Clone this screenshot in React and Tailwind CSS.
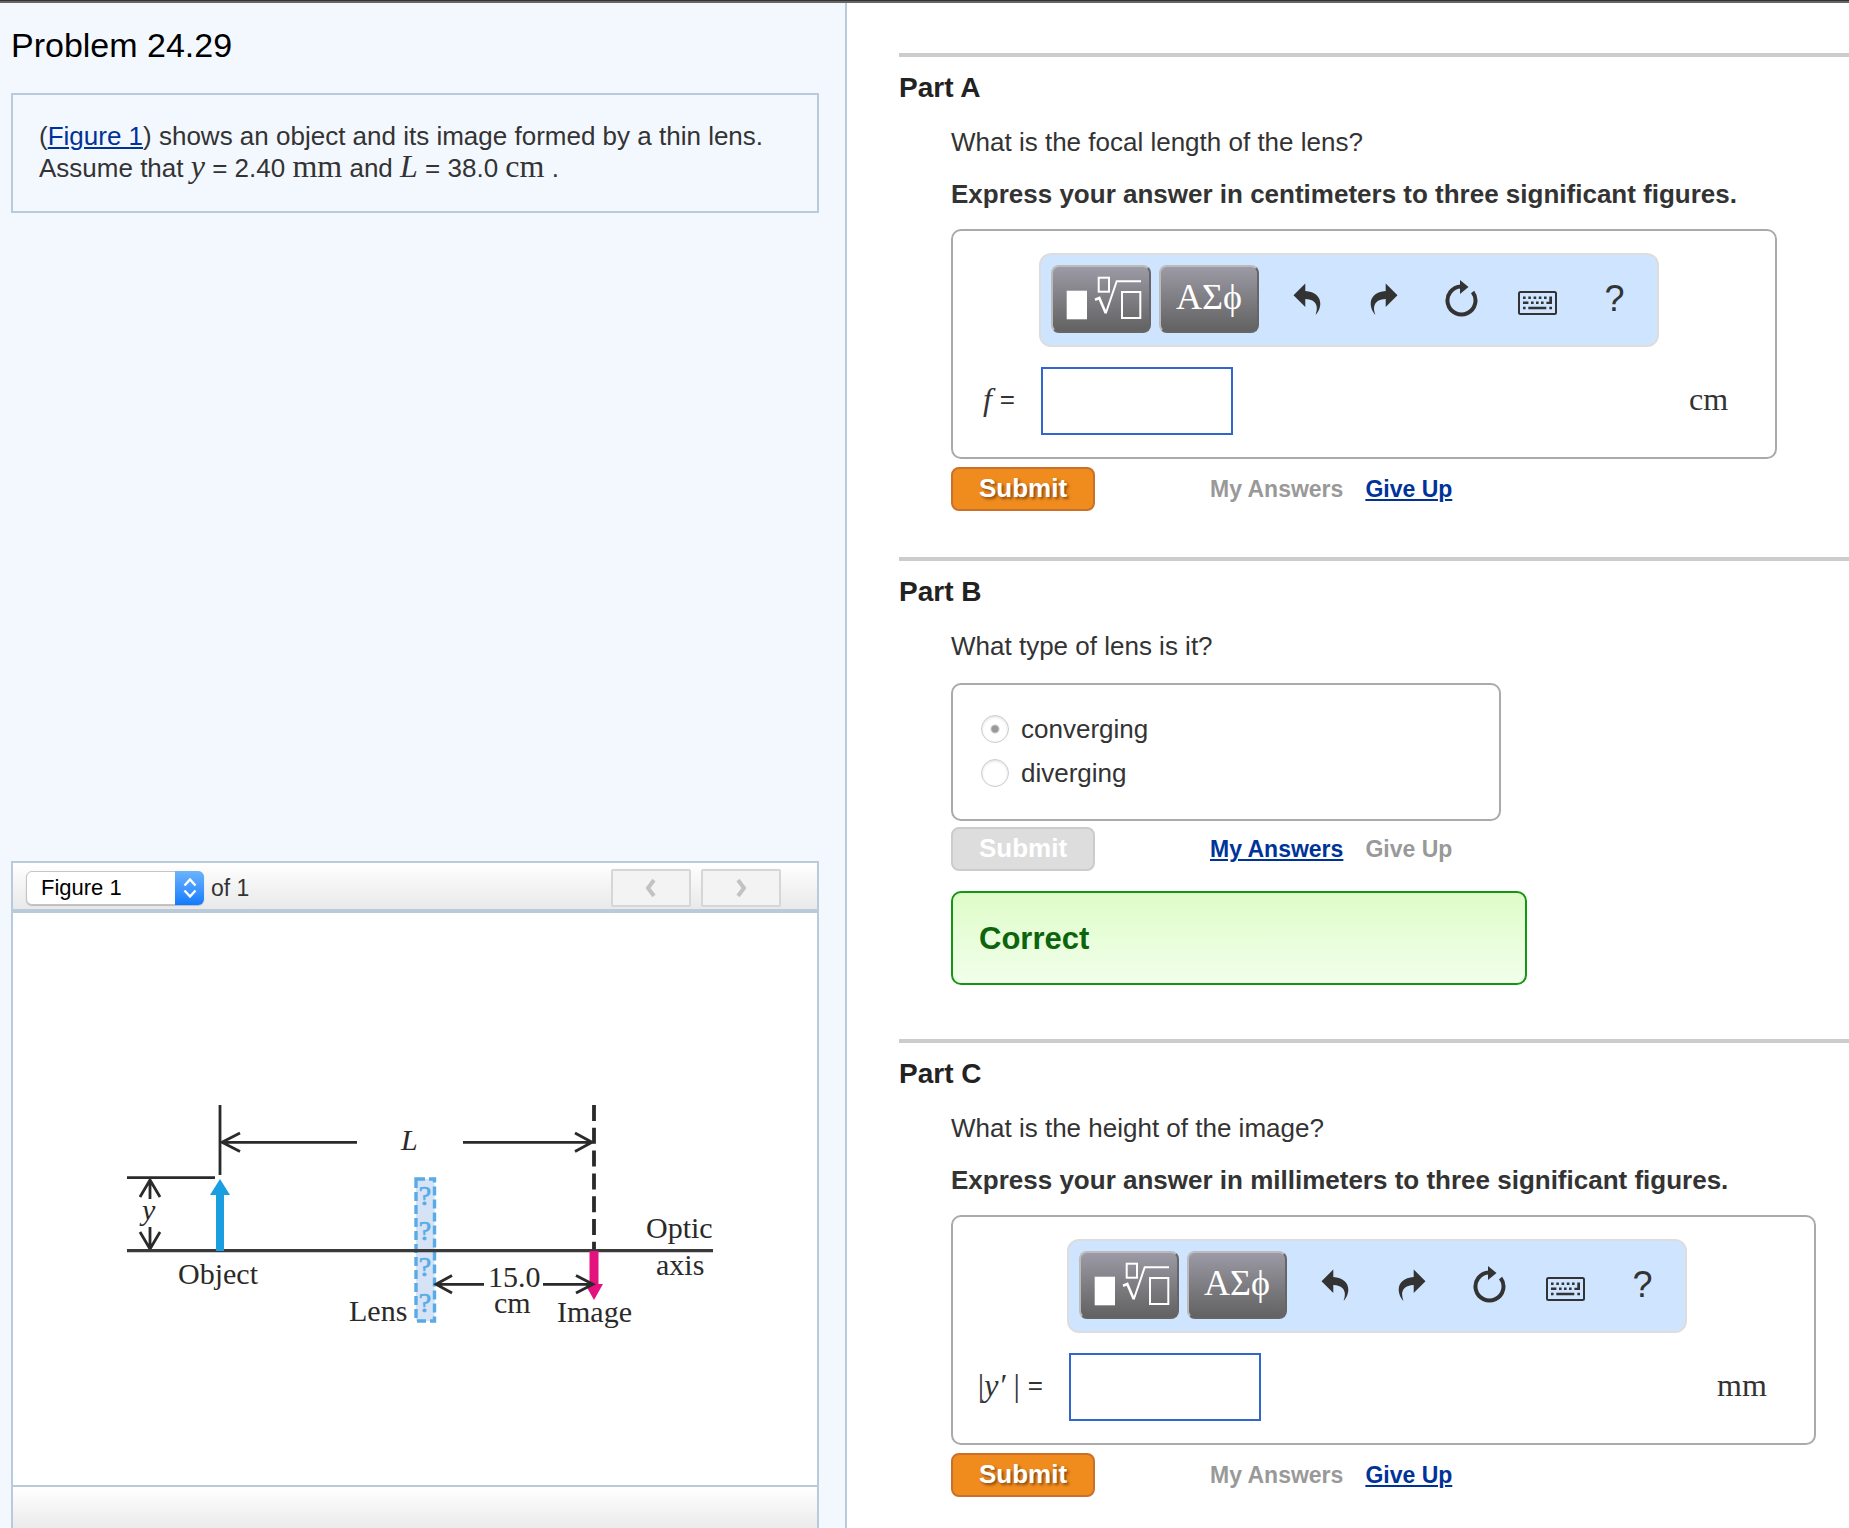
import { useState } from "react";

function UndoIcon({ flipped = false }) {
  return (
    <svg width="28" height="32" viewBox="0 0 28 32" fill="#333" aria-hidden="true">
      <path
        transform={flipped ? "matrix(-1 0 0 1 28 0)" : undefined}
        d="M0.5 12.3 L12.3 0.5 V8 C22 8.5 27.5 14 27.3 21 C27.2 25 25 30 22.6 31.7 C25.5 24 24 16.5 12.3 16 V24 Z"
      />
    </svg>
  );
}

function ResetIcon() {
  return (
    <svg width="34" height="38" viewBox="0 0 34 38" aria-hidden="true">
      <path d="M17 6.5 A14 14 0 1 0 28.6 12" fill="none" stroke="#333" strokeWidth="4" />
      <path d="M16 0 L24.5 7 L16 14 Z" fill="#333" />
    </svg>
  );
}

function KeyboardIcon() {
  return (
    <svg width="39" height="24" viewBox="0 0 39 24" aria-hidden="true">
      <rect x="1" y="1" width="37" height="22" rx="1.5" fill="none" stroke="#333" strokeWidth="2" />
      <g fill="#333">
        <path d="M5 5.5h2.6v2.6H5z M10.3 5.5h2.6v2.6h-2.6z M15.6 5.5h2.6v2.6h-2.6z M20.8 5.5h2.6v2.6h-2.6z M26 5.5h2.6v2.6H26z" />
        <path d="M31.3 5.5h2.7v7.6h-5.6v-2.4h2.9z" />
        <path d="M5 10.6h5.4V13H5z M13 10.6h2.6V13H13z M18 10.6h2.6V13H18z M23 10.6h2.6V13H23z" />
        <path d="M5 15.8h2.6v2.4H5z M10.3 15.8h18v2.4h-18z M31.3 15.8H34v2.4h-2.7z" />
      </g>
    </svg>
  );
}

function TemplateIcon() {
  return (
    <svg width="96" height="64" viewBox="1 2 96 64" fill="none" stroke="#fff" aria-hidden="true">
      <rect x="14.7" y="25.7" width="20.3" height="28.6" fill="#fff" stroke="none" />
      <rect x="46.7" y="12.7" width="10.3" height="14" strokeWidth="2" />
      <path d="M43 34.7 L47.3 33 L53.7 48" strokeWidth="2.6" />
      <path d="M53.7 48.5 L64.7 16.3 H89" strokeWidth="2" />
      <rect x="70" y="27" width="18.3" height="26" strokeWidth="2" />
    </svg>
  );
}

const TOOLS = [
  { label: "Undo", icon: <UndoIcon /> },
  { label: "Redo", icon: <UndoIcon flipped /> },
  { label: "Reset", icon: <ResetIcon /> },
  { label: "Keyboard shortcuts", icon: <KeyboardIcon />, className: "pt-2" },
  { label: "Help", icon: "?" },
];

const GRAY_BUTTON =
  "flex h-[68px] w-[100px] items-center justify-center rounded-lg border-2 border-t-[#bbb] border-l-[#bbb] border-r-[#666] border-b-[#666] bg-linear-to-b from-[#9c9aa5] to-[#626262]";

function Toolbar() {
  return (
    <div className="flex h-[94px] rounded-xl border-2 border-[#ddd] bg-[#cfe5ff] p-2.5">
      <div className="flex gap-2">
        <button type="button" aria-label="Templates" className={GRAY_BUTTON}>
          <TemplateIcon />
        </button>
        <button
          type="button"
          aria-label="Symbols"
          className={`${GRAY_BUTTON} pb-1 font-['Liberation_Serif',serif] text-[36px] leading-10 text-white`}
        >
          ΑΣϕ
        </button>
      </div>
      <div className="ml-[9px] flex">
        {TOOLS.map((tool) => (
          <button
            key={tool.label}
            type="button"
            aria-label={tool.label}
            className={`flex h-[68px] w-[77px] items-center justify-center text-[36px] leading-10 text-[#333] ${tool.className ?? ""}`}
          >
            {tool.icon}
          </button>
        ))}
      </div>
    </div>
  );
}

function MathText({ children }) {
  return <span className="font-['Liberation_Serif',serif] text-[32px] leading-6">{children}</span>;
}

function AnswerBox({ id, label, unit, columns }) {
  return (
    <div
      className={`mt-[19px] mb-2 grid w-fit gap-y-5 rounded-[10px] border-2 border-[#aaa] p-[22px] pr-[47px] ${columns}`}
    >
      <div className="col-start-2">
        <Toolbar />
      </div>
      <label
        htmlFor={id}
        className="col-start-1 flex items-center justify-end gap-2 pr-6 pb-1 whitespace-nowrap"
      >
        <MathText>{label}</MathText>
        <span>=</span>
      </label>
      <input
        id={id}
        type="text"
        className="ml-0.5 h-[68px] w-48 border-2 border-[#36c] bg-white px-2 outline-none"
      />
      <span className="ml-[30px] flex items-center pb-1">
        <MathText>{unit}</MathText>
      </span>
    </div>
  );
}

function ActionLink({ active, children }) {
  return active ? (
    <a href="#" className="text-[#039] underline">
      {children}
    </a>
  ) : (
    <span className="text-[#999]">{children}</span>
  );
}

function Actions({ done = false }) {
  return (
    <div className="flex items-center text-[23px] leading-7 font-bold">
      <button
        type="button"
        disabled={done}
        className={`h-11 w-36 rounded-lg border-2 pb-0.5 text-[26px] leading-8 text-white ${
          done
            ? "border-[#ccc] bg-[#ddd]"
            : "border-[#c9702b] bg-[#f08c1e] [text-shadow:2px_2px_3px_#8a4a10]"
        }`}
      >
        Submit
      </button>
      <div className="ml-[115px] flex gap-[22px]">
        <ActionLink active={done}>My Answers</ActionLink>
        <ActionLink active={!done}>Give Up</ActionLink>
      </div>
    </div>
  );
}

function Part({ name, question, instructions, className = "", children }) {
  return (
    <section className={`border-t-4 border-[#ccc] pt-[13px] ${className}`}>
      <h2 className="text-[28px] leading-9 font-bold text-[#222]">{name}</h2>
      <div className="pl-[52px]">
        <p className="mt-5">{question}</p>
        {instructions && <p className="mt-5 font-bold">{instructions}</p>}
        {children}
      </div>
    </section>
  );
}

function LensOptions() {
  const [lens, setLens] = useState("converging");

  return (
    <div className="mt-[21px] mb-1.5 flex h-[138px] w-[550px] flex-col gap-3 rounded-[10px] border-2 border-[#aaa] px-7 pt-7">
      {["converging", "diverging"].map((option) => (
        <label key={option} className="flex items-center gap-3">
          <input
            type="radio"
            name="lens"
            value={option}
            checked={lens === option}
            onChange={() => setLens(option)}
            className="size-7 appearance-none rounded-full border border-[#ccc] bg-white shadow-[inset_0_1px_3px_#ddd] checked:bg-[radial-gradient(circle,#999_3px,#fff_5px)]"
          />
          {option}
        </label>
      ))}
    </div>
  );
}

// Object, unknown lens and image along the optic axis
function LensDiagram() {
  return (
    <svg
      width="600"
      height="230"
      viewBox="0 0 600 230"
      role="img"
      aria-label="Thin lens diagram"
      className="font-['Liberation_Serif',serif] text-[30px]"
    >
      <g fill="none" stroke="#2b2a2a" strokeWidth="2.8">
        <path d="M12 77.7 H100 M105 5 V75" />
        <path d="M107 42.3 H242 M125 33 L107 42.3 L125 51.5" />
        <path d="M348 42.3 H477 M460 33 L477 42.3 L460 51.5" />
        <path d="M35 80 V99 M25 97 L35 80 L45 97" />
        <path d="M35 127 V149 M25 132 L35 149 L45 132" />
        <path d="M479 5 V151" strokeWidth="3.8" strokeDasharray="16 6.8" />
      </g>
      <rect
        x="301"
        y="79"
        width="18.5"
        height="142"
        fill="#d6e3f6"
        stroke="#58abe6"
        strokeWidth="3.4"
        strokeDasharray="9 4"
      />
      <g fill="#58abe6" stroke="#58abe6" strokeWidth="0.7" fontSize="28" textAnchor="middle">
        <text x="310" y="105">?</text>
        <text x="310" y="140">?</text>
        <text x="310" y="176">?</text>
        <text x="310" y="212">?</text>
      </g>
      <path d="M12 150.7 H598" stroke="#3a3a3a" strokeWidth="3.2" />
      <path d="M101 151 V95 H95 L105 79 L115 95 H109 V151 Z" fill="#1b9de2" />
      <path d="M474.5 151 V184 H470 L479 200 L488 184 H483.5 V151 Z" fill="#e4127f" />
      <g fill="none" stroke="#2b2a2a" strokeWidth="2.8">
        <path d="M321 184.3 H369 M337 175.5 L321 184.3 L337 193" />
        <path d="M428 184.3 H478 M461 175.5 L478 184.3 L461 193" />
      </g>
      <g fill="#2b2a2a">
        <text x="286" y="50" fontStyle="italic">L</text>
        <text x="27" y="120" fontStyle="italic">y</text>
        <text x="63" y="184">Object</text>
        <text x="234" y="221">Lens</text>
        <text x="373" y="187">15.0</text>
        <text x="379" y="213">cm</text>
        <text x="442" y="222">Image</text>
        <text x="531" y="138">Optic</text>
        <text x="541" y="175">axis</text>
      </g>
    </svg>
  );
}

function NavButton({ label, path }) {
  return (
    <button
      type="button"
      disabled
      aria-label={label}
      className="flex h-[38px] w-20 items-center justify-center rounded-xs border-2 border-[#d6d6d6] bg-[#f3f3f3]"
    >
      <svg width="14" height="18" viewBox="0 0 14 18" aria-hidden="true">
        <path d={path} fill="none" stroke="#c2c2c2" strokeWidth="4" />
      </svg>
    </button>
  );
}

function FigurePanel() {
  return (
    <section className="mt-auto border-2 border-b-0 border-[#b9cbdb]">
      <header className="flex h-[50px] items-center border-b-4 border-[#b9cbdb] bg-linear-to-b from-white to-[#e9e9e9] pt-[3px] pr-9 pl-[13px]">
        <div className="relative">
          <select
            aria-label="Figure"
            className="block h-[34px] w-[178px] appearance-none rounded-md border border-[#c4c4c4] bg-white pl-3.5 text-[22px] leading-7 text-black shadow-[0_1px_1px_#bbb]"
          >
            <option>Figure 1</option>
          </select>
          <span className="pointer-events-none absolute inset-y-0 right-0 flex w-[29px] items-center justify-center rounded-r-md bg-linear-to-b from-[#6bb3fb] to-[#0a7bff]">
            <svg width="14" height="20" viewBox="0 0 14 20" aria-hidden="true">
              <path
                d="M1.5 7.5 L7 1.5 L12.5 7.5 M1.5 12.5 L7 18.5 L12.5 12.5"
                fill="none"
                stroke="#fff"
                strokeWidth="2.4"
              />
            </svg>
          </span>
        </div>
        <span className="ml-[7px] text-[23px]">of 1</span>
        <div className="ml-auto flex gap-2.5">
          <NavButton label="Previous figure" path="M10 1 L4 9 L10 17" />
          <NavButton label="Next figure" path="M4 1 L10 9 L4 17" />
        </div>
      </header>
      <div className="flex h-[572px] justify-center bg-white pt-[187px]">
        <LensDiagram />
      </div>
      <footer className="h-[43px] border-t-2 border-[#b9cbdb] bg-linear-to-b from-white to-[#ebebeb]" />
    </section>
  );
}

export default function App() {
  return (
    <div className="flex min-h-screen flex-col bg-white font-['Liberation_Sans',Arial,sans-serif] text-[26px] leading-8 text-[#333]">
      <div className="h-[3px] border-t border-[#333] bg-[#666]" />
      <div className="grid grow grid-cols-[847fr_1002fr]">
        <aside className="flex flex-col border-r-2 border-[#b9cbdb] bg-[#f3f8ff] pt-[22px] pr-[26px] pl-[11px]">
          <h1 className="text-[34px] leading-10 text-black">Problem 24.29</h1>
          <p className="mt-7 border-2 border-[#b9cbdb] px-[26px] pt-[25px] pb-[27px]">
            (
            <a href="#figure" className="text-[#039] underline">
              Figure 1
            </a>
            ) shows an object and its image formed by a thin lens. Assume that{" "}
            <MathText>
              <i>y</i>
            </MathText>{" "}
            = 2.40 <MathText>mm</MathText> and{" "}
            <MathText>
              <i>L</i>
            </MathText>{" "}
            = 38.0 <MathText>cm</MathText> .
          </p>
          <FigurePanel />
        </aside>

        <main className="min-w-0 pt-[50px] pl-[52px]">
          <Part
            name="Part A"
            question="What is the focal length of the lens?"
            instructions="Express your answer in centimeters to three significant figures."
            className="pb-[46px]"
          >
            <AnswerBox
              id="focal-length"
              unit="cm"
              columns="grid-cols-[64px_620px_auto]"
              label={<i>f</i>}
            />
            <Actions />
          </Part>

          <Part name="Part B" question="What type of lens is it?" className="pb-[54px]">
            <LensOptions />
            <Actions done />
            <div className="mt-5 flex h-[94px] w-[576px] items-center rounded-[10px] border-2 border-[#149614] bg-linear-to-b from-[#dffcc8] to-[#f1ffeb] px-[26px] pt-0.5 text-[31px] font-bold text-[#0c640c]">
              Correct
            </div>
          </Part>

          <Part
            name="Part C"
            question="What is the height of the image?"
            instructions="Express your answer in millimeters to three significant figures."
          >
            <AnswerBox
              id="image-height"
              unit="mm"
              columns="grid-cols-[92px_620px_auto]"
              label={
                <>
                  |<i>y′</i> |
                </>
              }
            />
            <Actions />
          </Part>
        </main>
      </div>
    </div>
  );
}
